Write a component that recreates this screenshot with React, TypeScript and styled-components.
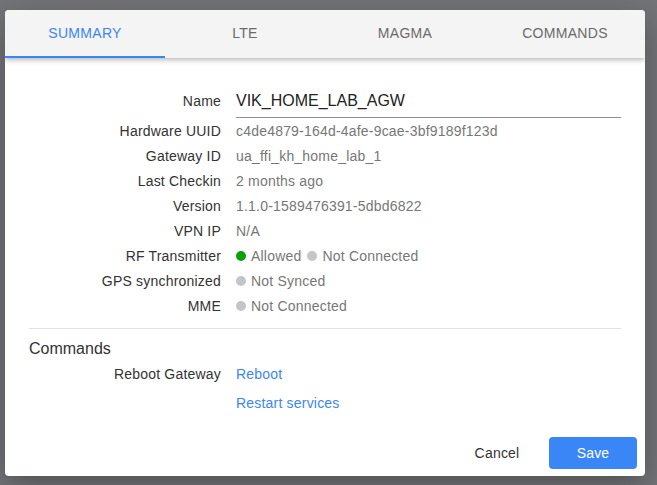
import styled, { createGlobalStyle } from 'styled-components';

const GlobalStyle = createGlobalStyle`
    html, body {
        margin: 0;
        padding: 0;
        background: #737478;
        font-family: "Liberation Sans", Arial, sans-serif;
    }
`;

const tabs = ['Summary', 'LTE', 'Magma', 'Commands'];

type Status = { color: 'green' | 'gray', text: string };

const rows: { label: string, value?: string, statuses?: Status[] }[] = [
    { label: 'Hardware UUID', value: 'c4de4879-164d-4afe-9cae-3bf9189f123d' },
    { label: 'Gateway ID', value: 'ua_ffi_kh_home_lab_1' },
    { label: 'Last Checkin', value: '2 months ago' },
    { label: 'Version', value: '1.1.0-1589476391-5dbd6822' },
    { label: 'VPN IP', value: 'N/A' },
    {
        label: 'RF Transmitter',
        statuses: [{ color: 'green', text: 'Allowed' }, { color: 'gray', text: 'Not Connected' }],
    },
    { label: 'GPS synchronized', statuses: [{ color: 'gray', text: 'Not Synced' }] },
    { label: 'MME', statuses: [{ color: 'gray', text: 'Not Connected' }] },
];

export default function App() {
    return (
        <>
            <GlobalStyle />
            <Backdrop>
                <Dialog>
                    <TabBar>
                        {tabs.map((tab, i) => (
                            <Tab key={tab} active={i === 0}>{tab}</Tab>
                        ))}
                    </TabBar>

                    <Body>
                        <NameRow>
                            <Label>Name</Label>
                            <NameField>VIK_HOME_LAB_AGW</NameField>
                        </NameRow>

                        {rows.map(row => (
                            <Row key={row.label}>
                                <Label>{row.label}</Label>
                                {row.value && <Value>{row.value}</Value>}
                                {row.statuses && (
                                    <Value>
                                        {row.statuses.map(s => (
                                            <StatusItem key={s.text}>
                                                <Dot color={s.color} />
                                                {s.text}
                                            </StatusItem>
                                        ))}
                                    </Value>
                                )}
                            </Row>
                        ))}

                        <Divider />

                        <SectionTitle>Commands</SectionTitle>
                        <CommandRow>
                            <Label>Reboot Gateway</Label>
                            <LinkButton>Reboot</LinkButton>
                        </CommandRow>
                        <CommandRow>
                            <Label />
                            <LinkButton>Restart services</LinkButton>
                        </CommandRow>
                    </Body>

                    <Footer>
                        <TextButton>Cancel</TextButton>
                        <PrimaryButton>Save</PrimaryButton>
                    </Footer>
                </Dialog>
            </Backdrop>
        </>
    );
}

const Backdrop = styled.div`
    width: 657px;
    height: 485px;
    padding: 10px 0 0 5px;
    box-sizing: border-box;
`;

const Dialog = styled.div`
    width: 640px;
    height: 466px;
    background: #fff;
    border-radius: 4px;
    overflow: hidden;
    display: flex;
    flex-direction: column;
    box-shadow: 0 10px 30px rgba(0, 0, 0, 0.3);
`;

const TabBar = styled.div`
    display: grid;
    grid-template-columns: repeat(4, 1fr);
    height: 48px;
    background: #f4f4f4;
    box-shadow: 0 2px 5px rgba(0, 0, 0, 0.28);
    position: relative;
    z-index: 1;
`;

const Tab = styled.div<{ active?: boolean }>`
    display: flex;
    align-items: center;
    justify-content: center;
    font-size: 14px;
    letter-spacing: 0.3px;
    text-transform: uppercase;
    color: ${p => (p.active ? '#3b86f7' : '#6b6b6b')};
    border-bottom: 2px solid ${p => (p.active ? '#3b86f7' : 'transparent')};
    box-sizing: border-box;
`;

const Body = styled.div`
    padding: 26px 24px 0;
    display: flex;
    flex-direction: column;
`;

const Row = styled.div`
    display: grid;
    grid-template-columns: 192px 1fr;
    column-gap: 15px;
    align-items: center;
    height: 25px;
    font-size: 14px;
    letter-spacing: 0.2px;
`;

const NameRow = styled(Row)`
    height: 34px;
`;

const CommandRow = styled(Row)`
    height: 29px;
`;

const Label = styled.div`
    text-align: right;
    color: #333;
`;

const Value = styled.div`
    color: #777;
    display: flex;
    align-items: center;
    gap: 6px;
    white-space: nowrap;
`;

const NameField = styled.div`
    font-size: 16px;
    letter-spacing: 0;
    color: #222;
    height: 33px;
    line-height: 32px;
    border-bottom: 1px solid #8e8e8e;
    box-sizing: border-box;
`;

const StatusItem = styled.span`
    display: inline-flex;
    align-items: center;
    gap: 5px;
`;

const Dot = styled.span<{ color: 'green' | 'gray' }>`
    width: 10px;
    height: 10px;
    border-radius: 50%;
    background: ${p => (p.color === 'green' ? '#0aa10a' : '#c3c5c9')};
`;

const Divider = styled.hr`
    border: none;
    border-top: 1px solid #e2e2e2;
    margin: 10px 0 0;
`;

const SectionTitle = styled.div`
    font-size: 16px;
    color: #333;
    line-height: 20px;
    margin-top: 10px;
`;

const LinkButton = styled.span`
    color: #3b86f7;
    font-size: 14px;
    cursor: pointer;
`;

const Footer = styled.div`
    margin-top: auto;
    display: flex;
    justify-content: flex-end;
    gap: 8px;
    padding: 0 8px 7px;
`;

const ButtonBase = styled.button`
    width: 88px;
    height: 32px;
    border: none;
    border-radius: 4px;
    font-family: inherit;
    font-size: 14px;
    letter-spacing: 0.2px;
    cursor: pointer;
`;

const TextButton = styled(ButtonBase)`
    background: transparent;
    color: #333;
`;

const PrimaryButton = styled(ButtonBase)`
    background: #3b86f7;
    color: #fff;
`;
